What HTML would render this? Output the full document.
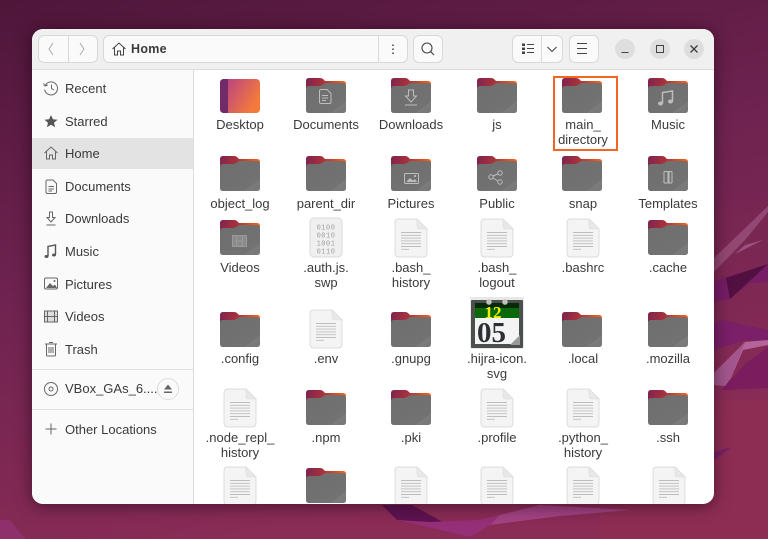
<!DOCTYPE html>
<html><head><meta charset="utf-8">
<style>
html,body{margin:0;padding:0;width:768px;height:539px;overflow:hidden;background:#5c1c44}
body{position:relative;font-family:"Liberation Sans",sans-serif;font-size:13px;color:#3d3d3d}
#bg{position:absolute;left:0;top:0}
#win{position:absolute;left:32px;top:29px;width:682px;height:475px;border-radius:11px;background:#fff;box-shadow:0 2px 16px rgba(20,0,15,.55);overflow:hidden;filter:blur(.3px)}
#hb{position:absolute;left:0;top:0;width:682px;height:40px;background:#f0f0f0;border-bottom:1px solid #dcdcdc}
.b{position:absolute;box-sizing:border-box;top:6px;height:28px;background:#fafafa;border:1px solid #d8d8d8;border-radius:6px}
.d{position:absolute;top:6px;width:1px;height:28px;background:#d8d8d8}
.c{position:absolute;top:10px;width:20px;height:20px;border-radius:50%;background:#dedede}
#sb{position:absolute;left:0;top:41px;width:161px;height:434px;background:#fafafa;border-right:1px solid #dcdcdc}
.r{position:absolute;left:33px;line-height:16px;white-space:nowrap;font-size:13px;color:#3a3a3a}
.hl{position:absolute;left:0;top:68px;width:161px;height:31px;background:#e3e3e3}
.sep{position:absolute;left:0;width:161px;height:1px;background:#dedede}
.t{position:absolute;width:90px;text-align:center;line-height:15px;font-size:13px;color:#3a3a3a;white-space:nowrap}
svg.a{position:absolute}
</style></head><body>
<svg id="bg" width="768" height="539" viewBox="0 0 768 539">
<defs>
<linearGradient id="g0" x1="0" y1="0" x2="0.35" y2="1"><stop offset="0" stop-color="#4f163a"/><stop offset=".5" stop-color="#6f2350"/><stop offset="1" stop-color="#8a2c56"/></linearGradient>
<linearGradient id="fb" x1="0" y1="0" x2="1" y2="0.1"><stop offset="0" stop-color="#7c2350"/><stop offset=".45" stop-color="#a8323c"/><stop offset=".85" stop-color="#e9541f"/><stop offset="1" stop-color="#f06020"/></linearGradient>
<linearGradient id="ff" x1="0" y1="0" x2="1" y2="1"><stop offset="0" stop-color="#6e6e6e"/><stop offset=".8" stop-color="#727272"/><stop offset=".81" stop-color="#7b7b7b"/><stop offset="1" stop-color="#767676"/></linearGradient>
<linearGradient id="dk" x1="0" y1="0" x2="1" y2="0.5"><stop offset="0" stop-color="#b03a8c"/><stop offset="1" stop-color="#f47a3c"/></linearGradient>
<symbol id="folder" viewBox="0 0 40 37">
<path d="M0 4Q0 1 3 1H14Q16 1 17 2L19 4H37Q40 4 40 7V14H0Z" fill="url(#fb)"/>
<path d="M0 12Q0 9 3 9H13Q15 9 17 7.500Q18.500 6 21 6H37Q40 6 40 9V33Q40 36 37 36H3Q0 36 0 33Z" fill="url(#ff)"/>
</symbol>
<symbol id="file" viewBox="0 0 34 40">
<path d="M4.500 1H23L33 11V35Q33 39 29 39H5Q1 39 1 35V5Q1 1 4.500 1Z" fill="#f4f4f4" stroke="#dcdcdc"/>
<path d="M23 1V8Q23 11 26 11H33Z" fill="#e8e8e8" stroke="#dcdcdc" stroke-width=".6"/>
<path d="M7 14.500H27M7 17.300H27M7 20.100H27M7 22.900H27M7 25.700H27M7 28.500H27M7 31.300H15" stroke="#bdbdbd" stroke-width=".9"/>
</symbol>
</defs>
<rect width="768" height="539" fill="url(#g0)"/>
<rect x="600" y="400" width="168" height="139" fill="#8f2f52" opacity=".6"/>
<polygon points="714,258 768,206 768,212 745,240 714,272" fill="#a35f88" opacity=".6"/>
<polygon points="735,254 763,240 745,245" fill="#b070a0" opacity=".6"/>
<polygon points="714,282 726,277 768,264 768,282 750,283 730,299 714,302" fill="#761d66"/>
<polygon points="726,278 768,264 730,299" fill="#521040"/>
<polygon points="714,323 722,320 768,330 768,342 745,340 714,350" fill="#7a1f68"/>
<polygon points="725,386 745,364 768,347 768,388 722,390" fill="#7a1c5e"/>
<polygon points="714,373 745,342 768,340 768,345 743,350 731,378 725,386 714,385" fill="#b4649a"/>
<polygon points="714,373 745,342 731,378 725,386 714,385" fill="#9a5088" opacity=".7"/>
<polygon points="714,452 732,447 714,460" fill="#7a1f68"/>
<polygon points="382,505 412,505 470,537 397,520" fill="#5f1350"/>
<polygon points="397,520 470,537 490,525 560,516 630,510 540,505 480,520 430,522" fill="#952f78"/>
<polygon points="490,525 560,516 630,510 540,505 500,515" fill="#a84a88" opacity=".7"/>
<polygon points="0,520 10,520 25,539 0,539" fill="#8f2f6c"/>
</svg>

<div id="win">
<div id="hb">
<div class="b" style="left:6px;width:60px"></div><div class="d" style="left:36px"></div>
<div class="b" style="left:71px;width:305px"></div><div class="d" style="left:346px"></div>
<div class="b" style="left:381px;width:30px"></div>
<div class="b" style="left:480px;width:51px"></div><div class="d" style="left:509px"></div>
<div class="b" style="left:537px;width:30px"></div>
<div class="c" style="left:583px"></div><div class="c" style="left:618px"></div><div class="c" style="left:652px"></div>
<div style="position:absolute;left:99px;top:12px;font-weight:bold;font-size:12.5px;line-height:16px;letter-spacing:.3px;color:#3a3a3a">Home</div>
<svg class="a" style="left:0;top:0" width="682" height="40" fill="none">
<path d="M21 14L17 20L21 26" stroke="#aaa"/><path d="M48 14L52 20L48 26" stroke="#aaa"/>
<path d="M80.500 20L87 14L93.500 20M82.500 18.500V26H85.500V22H88.500V26H91.500V18.500" stroke="#444"/>
<path d="M361 15.500v1.500M361 19.500v1.500M361 23.500v1.500" stroke="#3d3d3d" stroke-width="1.500"/>
<circle cx="395" cy="19" r="5" stroke="#444" stroke-width="1.100"/><path d="M398.500 22.500L402 26" stroke="#444" stroke-width="1.200"/>
<path d="M490 14.500h3v2.500h-3zM490 18.500h3v2.500h-3zM490 22.500h3v2.500h-3z" fill="#444"/><path d="M495 15.500h7M495 19.500h7M495 23.500h7" stroke="#444"/>
<path d="M515.500 18L520 22.500L524.500 18" stroke="#444"/>
<path d="M545 14.500h10M545 19.500h10M545 24.500h10" stroke="#444"/>
<path d="M589.500 23.500h7" stroke="#444"/>
<rect x="624.500" y="16.500" width="7" height="7" stroke="#444"/>
<path d="M658.500 16.500l7 7M665.500 16.500l-7 7" stroke="#3d3d3d" stroke-width="1.300"/>
</svg>
</div>

<div id="sb">
<div class="hl"></div>
<div class="r" style="top:11px">Recent</div>
<div class="r" style="top:44px">Starred</div>
<div class="r" style="top:76px">Home</div>
<div class="r" style="top:109px">Documents</div>
<div class="r" style="top:141px">Downloads</div>
<div class="r" style="top:174px">Music</div>
<div class="r" style="top:207px">Pictures</div>
<div class="r" style="top:239px">Videos</div>
<div class="r" style="top:272px">Trash</div>
<div class="sep" style="top:299px"></div>
<div class="r" style="top:311px">VBox_GAs_6....</div>
<div class="sep" style="top:339px"></div>
<div class="r" style="top:352px">Other Locations</div>
<div style="position:absolute;left:125px;top:308px;width:22px;height:22px;box-sizing:border-box;border:1px solid #dcdcdc;border-radius:50%"></div>
<svg class="a" style="left:0;top:0" width="161" height="400" fill="none" stroke="#666" stroke-width="1">
<path d="M13.200 15.500A6.500 6.500 0 1 1 12.600 19.500M11.500 13.500L13 16L15.800 15M19.500 14.500V18.500L22 20"/>
<path d="M19 45l1.900 4.300 4.600.4-3.500 3 1.100 4.600-4.100-2.500-4.100 2.500 1.100-4.600-3.500-3 4.600-.4z" fill="#555" stroke="none"/>
<path d="M12.500 83L19 77L25.500 83M14.500 81.500V89H17.500V85H20.500V89H23.500V81.500"/>
<path d="M15.500 110H21L24.500 113.500V122Q24.500 123.500 23 123.500H15.500Q14 123.500 14 122V111.500Q14 110 15.500 110ZM16.500 116.500H22M16.500 119H22M16.500 121H20"/>
<path d="M17.500 142H20.500V147.500H23L19 152L15 147.500H17.500ZM14.500 155H23.500"/>
<path d="M16 186V176.500L23.500 175V184.500" stroke="#555" stroke-width="1.400"/><ellipse cx="14.500" cy="186.500" rx="2" ry="1.500" fill="#555" stroke="none"/><ellipse cx="22" cy="185" rx="2" ry="1.500" fill="#555" stroke="none"/>
<rect x="12.500" y="208" width="13" height="11" rx="1.500"/><path d="M14 218L18 213L21 216L23 214.500L25 218Z" fill="#666" stroke="none"/><circle cx="22.500" cy="211" r="1" fill="#666" stroke="none"/>
<rect x="12.500" y="241" width="13" height="11" fill="#ddd"/><path d="M15.500 241v11M22.500 241v11M15.500 246.500h7M12.500 246.500h3M22.500 246.500h3"/>
<path d="M13 274H25M14.500 274V285Q14.500 286 15.500 286H22.500Q23.500 286 23.500 285V274M17 272.500H21M17 277V283M19 277V283M21 277V283"/>
<circle cx="19" cy="319" r="6.500"/><circle cx="19" cy="319" r="2"/>
<path d="M13.500 359H24.500M19 353.500V364.500"/>
<path d="M136 314.500L140 319.500H132ZM132 321.500H140V323H132Z" fill="#666" stroke="none"/>
</svg>
</div>

<svg class="a" style="left:0;top:0" width="682" height="475">
<rect x="188" y="50" width="40" height="34" rx="4" fill="url(#dk)"/><path d="M192 50H196V84H192Q188 84 188 80V54Q188 50 192 50Z" fill="#732a68"/>
<use href="#folder" x="274" y="48" width="40" height="37"/>
<use href="#folder" x="359" y="48" width="40" height="37"/>
<use href="#folder" x="445" y="48" width="40" height="37"/>
<use href="#folder" x="530" y="48" width="40" height="37"/>
<use href="#folder" x="616" y="48" width="40" height="37"/>
<use href="#folder" x="188" y="126" width="40" height="37"/>
<use href="#folder" x="274" y="126" width="40" height="37"/>
<use href="#folder" x="359" y="126" width="40" height="37"/>
<use href="#folder" x="445" y="126" width="40" height="37"/>
<use href="#folder" x="530" y="126" width="40" height="37"/>
<use href="#folder" x="616" y="126" width="40" height="37"/>
<use href="#folder" x="188" y="190" width="40" height="37"/>
<rect x="278" y="189" width="32" height="39" rx="4" fill="#f0f0f0" stroke="#dadada"/>
<text x="294" y="200.500" font-family="Liberation Mono,monospace" font-size="7" fill="#a0a0a0" text-anchor="middle" letter-spacing=".5">0100</text>
<text x="294" y="208.500" font-family="Liberation Mono,monospace" font-size="7" fill="#a0a0a0" text-anchor="middle" letter-spacing=".5">0010</text>
<text x="294" y="216.500" font-family="Liberation Mono,monospace" font-size="7" fill="#a0a0a0" text-anchor="middle" letter-spacing=".5">1001</text>
<text x="294" y="224.500" font-family="Liberation Mono,monospace" font-size="7" fill="#a0a0a0" text-anchor="middle" letter-spacing=".5">0110</text>
<use href="#file" x="362" y="189" width="34" height="40"/>
<use href="#file" x="448" y="189" width="34" height="40"/>
<use href="#file" x="534" y="189" width="34" height="40"/>
<use href="#folder" x="616" y="190" width="40" height="37"/>
<use href="#folder" x="188" y="282" width="40" height="37"/>
<use href="#file" x="277" y="280" width="34" height="40"/>
<use href="#folder" x="359" y="282" width="40" height="37"/>
<use href="#folder" x="530" y="282" width="40" height="37"/>
<use href="#folder" x="616" y="282" width="40" height="37"/>
<use href="#file" x="191" y="359" width="34" height="40"/>
<use href="#folder" x="274" y="360" width="40" height="37"/>
<use href="#folder" x="359" y="360" width="40" height="37"/>
<use href="#file" x="448" y="359" width="34" height="40"/>
<use href="#file" x="534" y="359" width="34" height="40"/>
<use href="#folder" x="616" y="360" width="40" height="37"/>
<use href="#file" x="191" y="437" width="34" height="40"/>
<use href="#folder" x="274" y="438" width="40" height="37"/>
<use href="#file" x="362" y="437" width="34" height="40"/>
<use href="#file" x="448" y="437" width="34" height="40"/>
<use href="#file" x="534" y="437" width="34" height="40"/>
<use href="#file" x="620" y="437" width="34" height="40"/>
<!-- emblems -->
<g fill="none" stroke="#bdbdbd" stroke-width="1">
<path d="M289 60.500H295L299 64.500V73Q299 74.500 297.500 74.500H289Q287.500 74.500 287.500 73V62Q287.500 60.500 289 60.500ZM290 66.500H296M290 69H296M290 71.500H294"/>
<path d="M376.500 61H381.500V67H384.500L379 73L373.500 67H376.500ZM373 76H385"/>
<path d="M630.500 74.500V63.500L640.500 62V72.500" stroke-width="1.500"/>
<rect x="372.500" y="144.500" width="14" height="10" rx="1"/>
<circle cx="459" cy="148" r="2.200"/><circle cx="468" cy="144" r="2.200"/><circle cx="468" cy="153" r="2.200"/><path d="M461 147L466 145M461 149L466 152"/>
<path d="M632 142.500V154M636 142.500V154M640 142.500V154M632 142.500H640M632 154H640"/>
</g>
<g fill="#bdbdbd" stroke="none">
<ellipse cx="628.500" cy="74.500" rx="2.500" ry="2"/><ellipse cx="638.500" cy="72.500" rx="2.500" ry="2"/>
<path d="M374 153L378 149L381 151.500L383 150L385 153Z"/><circle cx="383" cy="147" r="1.100"/>
<rect x="636" y="142" width="1.500" height="12"/>
</g>
<g fill="none" stroke="#9a9a9a" stroke-width="1">
<rect x="200.500" y="206.500" width="14" height="11" fill="#8a8a8a"/><path d="M204.500 206.500v11M210.500 206.500v11M204.500 212h6"/>
</g>
<!-- selection -->
<rect x="522" y="48" width="63" height="73" fill="none" stroke="#f26522" stroke-width="2"/>
<!-- calendar -->
<rect x="438" y="268" width="54" height="52" rx="2" fill="#e8e8e8"/>
<rect x="439" y="271" width="52" height="48" rx="1" fill="#4c504c"/>
<rect x="443" y="274" width="44" height="15" fill="#0a6a0a"/><rect x="443" y="274" width="44" height="5" fill="#052a05"/>
<rect x="443" y="289" width="44" height="26" fill="#f4f4f4"/>
<path d="M478 316L488 306V316Z" fill="#9a9a9a"/>
<circle cx="457" cy="273" r="2.800" fill="#c0c0c0"/><circle cx="473" cy="273" r="2.800" fill="#c0c0c0"/>
<text x="461" y="289" font-family="Liberation Serif,serif" font-weight="bold" font-size="17" fill="#f0f000" text-anchor="middle">12</text>
<text x="459.500" y="313" font-family="Liberation Serif,serif" font-weight="bold" font-size="29" fill="#2c3034" text-anchor="middle">05</text>
</svg>

<div class="t" style="left:163px;top:88px">Desktop</div>
<div class="t" style="left:249px;top:88px">Documents</div>
<div class="t" style="left:334px;top:88px">Downloads</div>
<div class="t" style="left:420px;top:88px">js</div>
<div class="t" style="left:506px;top:88px">main_<br>directory</div>
<div class="t" style="left:591px;top:88px">Music</div>

<div class="t" style="left:163px;top:167px">object_log</div>
<div class="t" style="left:249px;top:167px">parent_dir</div>
<div class="t" style="left:334px;top:167px">Pictures</div>
<div class="t" style="left:420px;top:167px">Public</div>
<div class="t" style="left:506px;top:167px">snap</div>
<div class="t" style="left:591px;top:167px">Templates</div>

<div class="t" style="left:163px;top:231px">Videos</div>
<div class="t" style="left:249px;top:231px">.auth.js.<br>swp</div>
<div class="t" style="left:334px;top:231px">.bash_<br>history</div>
<div class="t" style="left:420px;top:231px">.bash_<br>logout</div>
<div class="t" style="left:506px;top:231px">.bashrc</div>
<div class="t" style="left:591px;top:231px">.cache</div>

<div class="t" style="left:163px;top:322px">.config</div>
<div class="t" style="left:249px;top:322px">.env</div>
<div class="t" style="left:334px;top:322px">.gnupg</div>
<div class="t" style="left:420px;top:322px">.hijra-icon.<br>svg</div>
<div class="t" style="left:506px;top:322px">.local</div>
<div class="t" style="left:591px;top:322px">.mozilla</div>

<div class="t" style="left:163px;top:401px">.node_repl_<br>history</div>
<div class="t" style="left:249px;top:401px">.npm</div>
<div class="t" style="left:334px;top:401px">.pki</div>
<div class="t" style="left:420px;top:401px">.profile</div>
<div class="t" style="left:506px;top:401px">.python_<br>history</div>
<div class="t" style="left:591px;top:401px">.ssh</div>
</div>
</body></html>
